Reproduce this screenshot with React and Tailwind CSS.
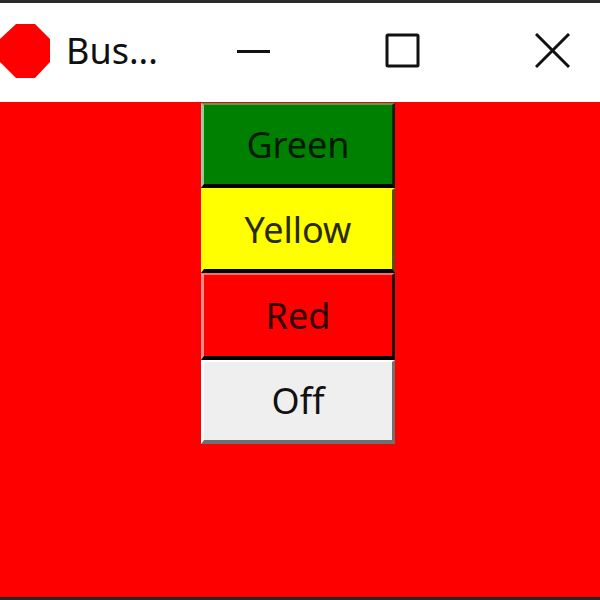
import React from 'react';

const BUTTONS = [
  {
    label: 'Green',
    className:
      'h-[85px] bg-[#008000] text-[#001a00] border-t-[#4d9f4d] border-l-[#9cc79c] border-r-[#002800] border-b-black'
  },
  {
    label: 'Yellow',
    className:
      'h-[85px] bg-[#ffff00] text-[#2a2a00] border-t-[#ffff00] border-l-[#ffff00] border-r-[#555500] border-b-black'
  },
  {
    label: 'Red',
    className:
      'h-[87px] bg-[#ff0000] text-[#300000] border-t-[#ff6a6a] border-l-[#ff9090] border-r-[#200000] border-b-black'
  },
  {
    label: 'Off',
    className:
      'h-[84px] bg-[#efefef] text-[#111111] border-t-white border-l-white border-r-[#707070] border-b-[#707070]'
  }
];

function WindowIcon({ children }) {
  return (
    <svg width="36" height="36" viewBox="0 0 36 36" fill="none" stroke="#111111" strokeWidth="3">
      {children}
    </svg>
  );
}

export default function App() {
  return (
    <div className="w-[600px] h-[600px] flex flex-col overflow-hidden bg-[#ff0000] font-['Noto_Sans',sans-serif]">
      <div className="h-[3px] bg-[#2a2a2a]" />

      {/* タイトルバー */}
      <div className="h-[99px] pb-[4px] bg-white flex items-center">
        <svg width="50" height="54" viewBox="0 0 50 54" className="shrink-0">
          <polygon points="16,0 35,0 50,15 50,38 35,54 16,54 0,38 0,15" fill="#ff0000" />
        </svg>
        <span className="ml-[16px] w-[110px] text-[36px] leading-none text-[#101010] whitespace-nowrap">
          Bus...
        </span>
        <div className="ml-[60px] flex items-center">
          <WindowIcon>
            <path d="M1 18.5H34" />
          </WindowIcon>
          <div className="ml-[113px]">
            <WindowIcon>
              <rect x="2" y="2" width="31" height="31" rx="1" />
            </WindowIcon>
          </div>
          <div className="ml-[114px]">
            <WindowIcon>
              <path d="M1 1L34 34M34 1L1 34" />
            </WindowIcon>
          </div>
        </div>
      </div>

      <div className="flex-1 flex flex-col items-center">
        <div className="w-[194px] ml-[-4px] mt-[1px] flex flex-col">
          {BUTTONS.map((button) => (
            <div
              key={button.label}
              className={`border-solid border-t-[2px] border-l-[3px] border-r-[3px] border-b-[4px] flex items-center justify-center text-[36px] leading-none ${button.className}`}
            >
              {button.label}
            </div>
          ))}
        </div>
      </div>

      <div className="h-[3px] bg-[#1c2a2a]" />
    </div>
  );
}
